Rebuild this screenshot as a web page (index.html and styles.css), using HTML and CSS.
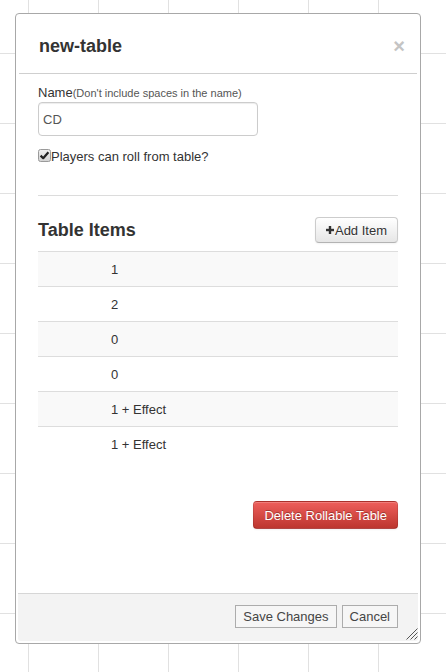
FILE: index.html
```html
<!DOCTYPE html>
<html lang="en">
<head>
<meta charset="utf-8">
<title>new-table</title>
<link rel="stylesheet" href="styles.css">
</head>
<body>
<div class="dialog">
  <div class="dlg-header">
    <h3 class="dlg-title">new-table</h3>
    <span class="close">×</span>
  </div>
  <div class="dlg-body">
    <label class="field-label">Name<small>(Don't include spaces in the name)</small></label>
    <input class="text-input" type="text" value="CD">
    <label class="check-row">
      <svg class="check-box" width="13" height="13" viewBox="0 0 13 13">
        <defs>
          <linearGradient id="cbg" x1="0" y1="0" x2="0" y2="1">
            <stop offset="0" stop-color="#f0f0f0"/>
            <stop offset="1" stop-color="#d2d2d2"/>
          </linearGradient>
        </defs>
        <rect x="0.5" y="0.5" width="12" height="12" rx="2" fill="url(#cbg)" stroke="#9a9a9a"/>
        <path d="M2.6 6.6 L5.2 9.2 L10.4 3.2" fill="none" stroke="#222" stroke-width="2.2" stroke-linejoin="round"/>
      </svg>
      <span>Players can roll from table?</span>
    </label>
    <hr class="sep">
    <div class="items-head">
      <h4 class="items-title">Table Items</h4>
      <button class="btn" type="button"><svg class="plus" width="8" height="8" viewBox="0 0 8 8"><rect x="2.8" y="0" width="2.4" height="8" fill="#333"/><rect x="0" y="2.8" width="8" height="2.4" fill="#333"/></svg>Add Item</button>
    </div>
    <div class="items">
      <div class="item-row">1</div>
      <div class="item-row">2</div>
      <div class="item-row">0</div>
      <div class="item-row">0</div>
      <div class="item-row">1 + Effect</div>
      <div class="item-row">1 + Effect</div>
    </div>
    <div class="danger-row">
      <button class="btn-danger" type="button">Delete Rollable Table</button>
    </div>
  </div>
  <div class="dlg-footer">
    <button class="ui-btn" type="button">Save Changes</button>
    <button class="ui-btn" type="button">Cancel</button>
  </div>
  <svg class="resize-handle" width="12" height="12" viewBox="0 0 12 12">
    <path d="M11.5 0.5 L0.5 11.5 M11.5 4.5 L4.5 11.5 M11.5 8.5 L8.5 11.5" stroke="#555" stroke-width="1" fill="none"/>
  </svg>
</div>
</body>
</html>
```
FILE: styles.css
```css
html {
  height: 100%;
}

body {
  margin: 0;
  padding: 13px 0 0 15px;
  min-height: 100%;
  box-sizing: border-box;
  font-family: "Liberation Sans", Arial, sans-serif;
  font-size: 13px;
  color: #333;
  background-color: #fff;
  background-image:
    linear-gradient(to right, #e1e1e1 1px, transparent 1px),
    linear-gradient(to bottom, #e1e1e1 1px, transparent 1px);
  background-size: 70px 70px;
  background-position: 28px 53px;
}

.dialog {
  position: relative;
  width: 400px;
  height: 625px;
  padding: 2px;
  border: 1px solid #a8a8a8;
  border-radius: 4px;
  background: #fff;
  display: flex;
  flex-direction: column;
}

.dlg-header {
  display: flex;
  justify-content: space-between;
  align-items: center;
  margin: 0 1px;
  padding: 20px 12px 17px 20px;
  border-bottom: 1px solid #cfcfcf;
}

.dlg-title {
  margin: 0;
  font-size: 18px;
  line-height: 20px;
  font-weight: bold;
  color: #333;
}

.close {
  font-size: 20px;
  line-height: 20px;
  font-weight: bold;
  color: #c4c4c4;
}

.dlg-body {
  flex: 1;
  padding: 9px 20px 0;
}

.field-label {
  display: block;
  height: 19px;
  line-height: 19px;
  font-size: 13px;
  color: #333;
}

.field-label small {
  font-size: 11px;
  line-height: 0;
  color: #555;
}

.text-input {
  display: block;
  box-sizing: border-box;
  width: 220px;
  height: 34px;
  margin: 0;
  padding: 0 4px;
  border: 1px solid #ccc;
  border-radius: 4px;
  font-family: "Liberation Sans", Arial, sans-serif;
  font-size: 13px;
  color: #555;
  box-shadow: inset 0 1px 1px rgba(0, 0, 0, 0.075);
  outline: none;
}

.check-row {
  display: flex;
  align-items: center;
  height: 20px;
  margin-top: 10px;
  color: #333;
}

.check-box {
  display: block;
  margin-right: 0;
  margin-top: -2px;
}

.sep {
  margin: 29px 0 0;
  height: 0;
  border: 0;
  border-top: 1px solid #dcdcdc;
}

.items-head {
  display: flex;
  justify-content: space-between;
  align-items: center;
  margin-top: 21px;
}

.items-title {
  margin: 0;
  font-size: 18px;
  line-height: 20px;
  font-weight: bold;
  color: #333;
}

.btn {
  display: flex;
  align-items: center;
  box-sizing: border-box;
  height: 26px;
  padding: 0 10px;
  margin: 0;
  border: 1px solid #cccccc;
  border-bottom-color: #b3b3b3;
  border-radius: 4px;
  background: linear-gradient(to bottom, #ffffff, #e6e6e6);
  box-shadow: inset 0 1px 0 rgba(255, 255, 255, 0.2), 0 1px 2px rgba(0, 0, 0, 0.05);
  font-family: "Liberation Sans", Arial, sans-serif;
  font-size: 13px;
  color: #333;
  text-shadow: 0 1px 1px rgba(255, 255, 255, 0.75);
}

.plus {
  display: block;
  margin-right: 1px;
}

.items {
  margin-top: 8px;
}

.item-row {
  display: flex;
  align-items: center;
  box-sizing: border-box;
  height: 35px;
  padding-left: 73px;
  border-top: 1px solid #dddddd;
  color: #333;
}

.item-row:nth-child(odd) {
  background: #f9f9f9;
}

.danger-row {
  display: flex;
  justify-content: flex-end;
  margin-top: 40px;
}

.btn-danger {
  box-sizing: border-box;
  height: 28px;
  padding: 0 10px;
  margin: 0;
  border: 1px solid rgba(0, 0, 0, 0.1);
  border-bottom-color: rgba(0, 0, 0, 0.25);
  border-radius: 4px;
  background: linear-gradient(to bottom, #ee5f5b, #bd362f);
  box-shadow: inset 0 1px 0 rgba(255, 255, 255, 0.2), 0 1px 2px rgba(0, 0, 0, 0.05);
  font-family: "Liberation Sans", Arial, sans-serif;
  font-size: 13px;
  color: #fff;
  text-shadow: 0 -1px 0 rgba(0, 0, 0, 0.3);
}

.dlg-footer {
  display: flex;
  justify-content: flex-end;
  gap: 5px;
  padding: 11px 20px 13px;
  border-top: 1px solid #d6d6d6;
  background: #f3f3f3;
  border-radius: 0 0 3px 3px;
}

.ui-btn {
  box-sizing: border-box;
  height: 23px;
  padding: 0 7px;
  margin: 0;
  border: 1px solid #acacac;
  border-radius: 0;
  background: #f6f6f6;
  font-family: "Liberation Sans", Arial, sans-serif;
  font-size: 13px;
  color: #454545;
}

.resize-handle {
  position: absolute;
  right: 2px;
  bottom: 3px;
  display: block;
}
```
